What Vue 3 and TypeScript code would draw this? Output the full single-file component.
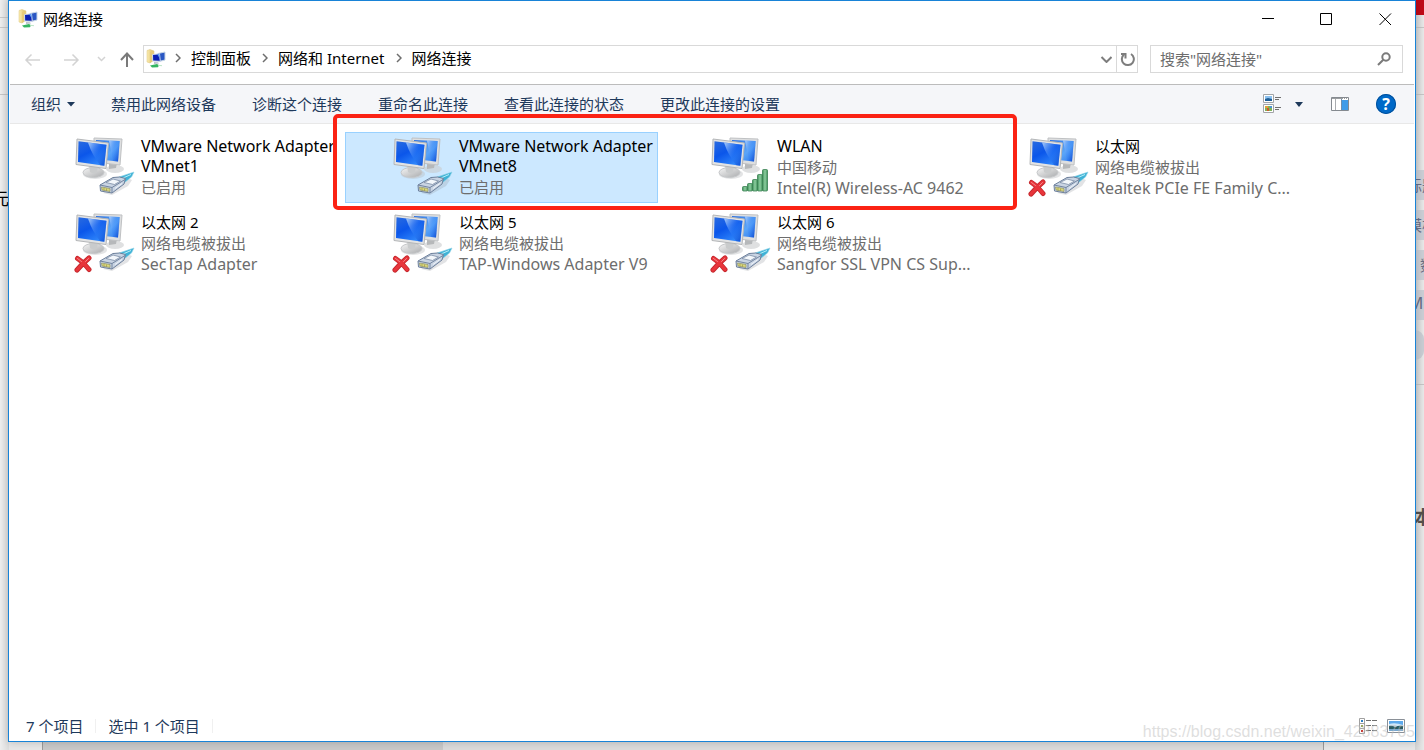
<script setup lang="ts">
import { ref } from 'vue'

interface Connection {
  name: string[]
  details: string[]
  kind: 'wired' | 'wireless'
  unplugged: boolean
}

const connections: Connection[] = [
  { name: ['VMware Network Adapter', 'VMnet1'], details: ['已启用'], kind: 'wired', unplugged: false },
  { name: ['VMware Network Adapter', 'VMnet8'], details: ['已启用'], kind: 'wired', unplugged: false },
  { name: ['WLAN'], details: ['中国移动', 'Intel(R) Wireless-AC 9462'], kind: 'wireless', unplugged: false },
  { name: ['以太网'], details: ['网络电缆被拔出', 'Realtek PCIe FE Family C...'], kind: 'wired', unplugged: true },
  { name: ['以太网 2'], details: ['网络电缆被拔出', 'SecTap Adapter'], kind: 'wired', unplugged: true },
  { name: ['以太网 5'], details: ['网络电缆被拔出', 'TAP-Windows Adapter V9'], kind: 'wired', unplugged: true },
  { name: ['以太网 6'], details: ['网络电缆被拔出', 'Sangfor SSL VPN CS Sup...'], kind: 'wired', unplugged: true },
]

const crumbs = ['控制面板', '网络和 Internet', '网络连接']
const commands = ['禁用此网络设备', '诊断这个连接', '重命名此连接', '查看此连接的状态', '更改此连接的设置']
const selected = ref(1)
const query = ref('')

const isLatin = (text: string): boolean => /^[\x20-\x7e]+$/.test(text)
</script>

<template>
  <div class="desktop">
    <svg class="defs" width="0" height="0" aria-hidden="true">
      <defs>
        <linearGradient id="screen" x1="0" y1="0" x2="0.6" y2="1">
          <stop offset="0" stop-color="#2a6be0" />
          <stop offset="0.5" stop-color="#0b56ea" />
          <stop offset="1" stop-color="#2f86fb" />
        </linearGradient>
        <linearGradient id="screenBack" x1="0" y1="0" x2="1" y2="1">
          <stop offset="0" stop-color="#2c6fe0" />
          <stop offset="0.6" stop-color="#5ba6f8" />
          <stop offset="1" stop-color="#2d78ee" />
        </linearGradient>
        <linearGradient id="shine" x1="0" y1="0" x2="1" y2="0.7">
          <stop offset="0" stop-color="#cfe6ff" stop-opacity="0.8" />
          <stop offset="0.6" stop-color="#2f7ff8" stop-opacity="0.3" />
          <stop offset="1" stop-color="#063fc8" stop-opacity="0.6" />
        </linearGradient>
        <linearGradient id="stand" x1="0" y1="0" x2="1" y2="1">
          <stop offset="0" stop-color="#f6f6f6" />
          <stop offset="1" stop-color="#a9abad" />
        </linearGradient>
        <linearGradient id="bar" x1="0" y1="0" x2="1" y2="0">
          <stop offset="0" stop-color="#3c9257" />
          <stop offset="0.5" stop-color="#8fcda1" />
          <stop offset="1" stop-color="#3c9257" />
        </linearGradient>
        <linearGradient id="folder" x1="0" y1="0" x2="1" y2="0">
          <stop offset="0" stop-color="#fbedb4" />
          <stop offset="1" stop-color="#d9b95c" />
        </linearGradient>
        <symbol id="folder-net" viewBox="0 0 20 20">
          <path d="M1 1.500 4 .5 8 2v9l-4 3-3-1z" fill="url(#folder)" stroke="#dcc478" stroke-width=".5" />
          <path d="M4 3 8 2v9l-4 3z" fill="#e6cb7a" />
          <path d="M12 4.500 19 3v8l-6 1.500z" fill="#2a57c4" stroke="#c7d6e6" />
          <path d="m6.500 5.500 7-.7.8 7.500-7.600-.3z" fill="#0b20b4" stroke="#d4deea" />
          <path d="m11 5 2.300-.2.6 5z" fill="#5f9df4" />
          <path d="m8 13 4 .2 1 1.300-5 .4z" fill="#bbc3ca" />
          <path d="M4 16.500 11 15l2 1.200-1 2-6 .3z" fill="#35b562" />
          <path d="m12 16.300 4 .4" stroke="#bde5c8" />
        </symbol>
      </defs>
    </svg>

    <div class="backdrop" aria-hidden="true">
      <div class="edge edge-left">
        <i class="band"></i>
        <i class="rule"></i>
        <span class="scrap scrap-left">元</span>
      </div>
      <div class="edge edge-right">
        <i class="red"></i>
        <i class="rule rule-top"></i>
        <i class="rule"></i>
        <span class="scrap tag tag-a">标题</span>
        <span class="scrap tag tag-b">模板</span>
        <span class="scrap tag tag-c">数据</span>
        <span class="scrap tag tag-d">M</span>
        <i class="knob"></i>
        <i class="rule rule-low"></i>
        <span class="scrap heading">本</span>
      </div>
      <div class="sheet"></div>
    </div>

    <main class="window">
      <header class="titlebar">
        <svg class="app-icon" width="20" height="20"><use href="#folder-net" /></svg>
        <h1>网络连接</h1>
        <div class="caption">
          <button type="button" aria-label="最小化">
            <svg width="13" height="13" viewBox="0 0 13 13"><path d="M1 5.500h12" /></svg>
          </button>
          <button type="button" aria-label="最大化">
            <svg width="13" height="13" viewBox="0 0 13 13"><path d="M.5.5h11v11H.5z" /></svg>
          </button>
          <button type="button" aria-label="关闭">
            <svg width="13" height="13" viewBox="0 0 13 13"><path d="m.5.5 11.500 11.500m0-11.500-11.500 11.500" /></svg>
          </button>
        </div>
      </header>

      <nav class="navrow">
        <div class="history">
          <button type="button" class="back" aria-label="后退" disabled>
            <svg width="16" height="14" viewBox="0 0 16 14"><path d="M16 8H2M7.500 2.500 2 8l5.500 5.500" /></svg>
          </button>
          <button type="button" class="forward" aria-label="前进" disabled>
            <svg width="16" height="14" viewBox="0 0 16 14"><path d="M0 8h14M8.500 2.500 14 8l-5.500 5.500" /></svg>
          </button>
          <button type="button" class="recent" aria-label="最近位置" disabled>
            <svg width="9" height="6" viewBox="0 0 9 6"><path d="m1 1 3.500 3.500L8 1" /></svg>
          </button>
          <button type="button" class="up" aria-label="上移">
            <svg width="14" height="16" viewBox="0 0 14 16"><path d="M7 16V2.500M1 9l6-6.500L13 9" /></svg>
          </button>
        </div>
        <div class="address">
          <svg class="address-icon" width="20" height="20"><use href="#folder-net" /></svg>
          <ol>
            <li v-for="crumb in crumbs" :key="crumb">
              <svg width="6" height="10" viewBox="0 0 6 10"><path d="m1 1 4 4-4 4" /></svg>
              <a href="#">{{ crumb }}</a>
            </li>
          </ol>
          <button type="button" class="drop" aria-label="以前的位置">
            <svg width="12" height="8" viewBox="0 0 12 8"><path d="m1.500 2 5 5 5-5" /></svg>
          </button>
          <button type="button" class="refresh" aria-label="刷新">
            <svg width="16" height="16" viewBox="0 0 16 16">
              <path d="M12 3A6 6 0 1 1 5 3.500" />
              <path d="M2 3h4.500v4.500" />
            </svg>
          </button>
        </div>
        <label class="search">
          <input v-model="query" type="text" aria-label="搜索" placeholder="搜索&quot;网络连接&quot;" />
          <svg width="14" height="14" viewBox="0 0 14 14"><circle cx="9" cy="5" r="3.700" /><path d="M6.300 7.700 1 13" /></svg>
        </label>
      </nav>

      <div class="toolbar">
        <button type="button" class="organize">
          组织
          <svg width="9" height="5" viewBox="0 0 9 5"><path d="M1 0h8L5 4.500z" fill="#1e395b" /></svg>
        </button>
        <button v-for="command in commands" :key="command" type="button">{{ command }}</button>
        <div class="tools">
          <button type="button" aria-label="更改视图">
            <svg width="19" height="20" viewBox="0 0 19 20">
              <path d="M.5.500h10v8H.5zM.5 10.500h10v8H.5z" fill="#fff" stroke="#a2a5a8" />
              <path d="M2 2h7v5H2z" fill="#8cc1ef" /><path d="m2 5 3-1 4 1v2H2z" fill="#1f5f96" />
              <path d="M2 12h7v5H2z" fill="#7fb35b" /><path d="M2 12h3v2H2z" fill="#e1a33a" /><path d="M4 14h2v3H4z" fill="#cf5a2c" /><path d="M7 12h2v2H7z" fill="#4e94d2" />
              <path d="M12 3.500h6M12 5.500h4M12 13.500h6M12 15.500h4" stroke="#707070" />
            </svg>
          </button>
          <button type="button" class="view-more" aria-label="更多选项">
            <svg width="8" height="5" viewBox="0 0 8 5"><path d="M0 0h8L4 5z" fill="#1e395b" /></svg>
          </button>
          <button type="button" class="pane" aria-label="显示预览窗格">
            <svg width="18" height="14" viewBox="0 0 18 14">
              <path d="M.5.500h17v13H.5z" fill="#fff" stroke="#858a90" />
              <path d="M1 1h16v1H1z" fill="#9a9da0" /><path d="M12 1h1v1h-1zM14 1h1v1h-1zM16 1h1v1h-1z" fill="#fff" />
              <path d="M4.500 2v11" stroke="#a9acb0" /><path d="M10.500 2v11" stroke="#6c8dae" />
              <path d="M11 3h6v10h-6z" fill="#3f9be8" />
            </svg>
          </button>
          <button type="button" class="help" aria-label="获取帮助"><span>?</span></button>
        </div>
      </div>

      <section class="content">
        <ul class="tiles">
          <li v-for="(item, index) in connections" :key="index">
            <button
              type="button"
              class="tile"
              :class="{ selected: selected === index }"
              @click="selected = index"
            >
              <svg class="tile-icon" width="62" height="62" viewBox="0 0 62 62" aria-hidden="true">
                <ellipse cx="42" cy="34" rx="9" ry="4" fill="#c9cbcd" opacity=".6" />
                <path d="m36 27 8 1-1 5-7 1z" fill="#b6b8ba" />
                <path d="m21 3 28 1-2 26-26-3z" fill="#dedfe0" stroke="#bfc1c3" />
                <path d="m23 5 23.700 1L45 26.500 22 24z" fill="url(#screenBack)" />
                <path d="m36 5.500 10.700.5L45 26.500l-5-.6z" fill="url(#shine)" />
                <ellipse cx="22" cy="39" rx="12" ry="5" fill="#b9bbbd" opacity=".4" />
                <ellipse cx="20.500" cy="37.500" rx="10.500" ry="5" fill="url(#stand)" stroke="#c6c8ca" />
                <path d="m16 30 9 1.200-1 6.300q-4 2-7-.5z" fill="#c9cbcc" />
                <path d="m4 4 31.500 4L33 33.500 3 29.500z" fill="#e2e3e4" stroke="#b4b6b8" />
                <path d="m5.500 6.300 28 3.500-2.200 21L5 27z" fill="url(#screen)" />
                <path d="m15 7.500 18.500 2.300-2.200 21-4-.5Q19 20 15 7.500z" fill="url(#shine)" />
                <template v-if="item.kind === 'wired'">
                  <path d="m30 58 9 2 16-9 4-6-7-3z" fill="#8b9196" opacity=".25" />
                  <path d="m46 42 15-5-2.500 5-7.500 6z" fill="#3fb2d6" stroke="#8ed2e6" stroke-width=".6" />
                  <path d="m50 43 8-3.500" stroke="#b5eef7" />
                  <path d="m27 50 13-7.500q7-1.500 12.500 1l-1.500 5.500-12 9L27.500 56z" fill="#c9d4e3" stroke="#6c7f9b" />
                  <path d="m27 50 12 2.500 13-8M39 52.500v5.500" fill="none" stroke="#72849f" />
                  <path d="m33 47.500 8.500 2 6-3.500-7.500-2z" fill="#f3f7fb" stroke="#7c8da6" stroke-width=".8" />
                  <path d="m42 53.500 7-5" stroke="#eff4fa" />
                  <path d="m28.500 52 8.500 1.500v3L29 55z" fill="#d9d77c" stroke="#8d9168" stroke-width=".7" />
                  <path d="M31 53v2.500M33.500 53.500V56" stroke="#a29b49" stroke-width=".7" />
                </template>
                <g v-else fill="url(#bar)" stroke="#3a8053" stroke-width=".8">
                  <rect x="33.500" y="51.500" width="5" height="4.500" rx="1" />
                  <rect x="38.500" y="48.500" width="5" height="7.500" rx="1" />
                  <rect x="43.500" y="44.500" width="5" height="11.500" rx="1" />
                  <rect x="48.500" y="39.500" width="5" height="16.500" rx="1" />
                  <rect x="53.500" y="34.500" width="5" height="21.500" rx="1" />
                </g>
                <g v-if="item.unplugged" fill="none" stroke-linecap="round">
                  <path d="M4.500 47.500Q10 51 16 58.500M16 47Q10 52 4 59" stroke="#c4272c" stroke-width="5" />
                  <path d="M4.500 47.500Q10 51 16 58.500M16 47Q10 52 4 59" stroke="#e8353b" stroke-width="3.400" />
                  <path d="m4.500 47.500 4 3M15.500 47.500l-3 3" stroke="#f4878a" stroke-width="1" />
                </g>
              </svg>
              <span class="label">
                <span class="name">
                  <span v-for="line in item.name" :key="line" :class="{ latin: isLatin(line) }">{{ line }}</span>
                </span>
                <span v-for="line in item.details" :key="line" class="detail" :class="{ latin: isLatin(line) }">{{ line }}</span>
              </span>
            </button>
          </li>
        </ul>
      </section>

      <footer class="status">
        <span class="cell">7 个项目</span>
        <span class="cell">选中 1 个项目</span>
        <div class="views">
          <button type="button" aria-label="详细信息">
            <svg width="19" height="16" viewBox="0 0 19 16">
              <path d="M.5.500h5v15h-5zM.5 5.500h5M.5 10.500h5" fill="#fff" stroke="#a0a0a0" />
              <path d="M2 2h2v2H2z" fill="#2f7fc2" /><path d="M2 7h2v2H2z" fill="#9ba85b" /><path d="M2 12h2v2H2z" fill="#c93e35" />
              <path d="M7 2.500h5m1 0h5M7 7.500h5m1 0h5M7 12.500h5m1 0h5" stroke="#6f6f6f" />
            </svg>
          </button>
          <button type="button" aria-label="大缩略图">
            <svg width="18" height="14" viewBox="0 0 18 14">
              <path d="M.5.500h17v13H.5z" fill="#fff" stroke="#8a9097" />
              <path d="M2 2h14v10H2z" fill="#5da9ec" /><path d="M2 5q6-2 14 1v2H2z" fill="#cfe7f9" />
              <path d="M2 7q3-1 6 1 4-2 8-1v3H2z" fill="#2b5b62" /><path d="M2 10h14v2H2z" fill="#77a7cf" />
            </svg>
          </button>
        </div>
      </footer>
    </main>

    <div class="highlight" aria-hidden="true"></div>
    <div class="watermark">https://blog.csdn.net/weixin_42883765</div>
  </div>
</template>

<style>
html,
body {
  margin: 0;
  background: #e6e6e6;
}
</style>

<style scoped>
.desktop {
  position: relative;
  box-sizing: border-box;
  min-height: 100vh;
  padding: 0 8px 8px;
  display: flex;
  overflow: hidden;
  font: 15px/20px "Noto Sans", "Noto Sans CJK SC", sans-serif;
  color: #000;
}
.defs {
  position: absolute;
}
button {
  padding: 0;
  border: 0;
  background: none;
  font: inherit;
  color: inherit;
  display: flex;
  align-items: center;
  justify-content: center;
}
svg {
  display: block;
  flex: none;
}

/* Page behind the window */
.backdrop {
  position: absolute;
  inset: 0;
  background: #e6e6e6;
}
.edge {
  position: absolute;
  top: 0;
  bottom: 0;
  width: 9px;
  overflow: hidden;
}
.edge-left {
  left: 0;
  background: linear-gradient(90deg, #eeeeee, #dcdcdc);
}
.edge-right {
  right: 0;
  background: linear-gradient(90deg, #d2d2d2, #e8e8e8);
}
.edge i {
  position: absolute;
  left: 0;
  right: 0;
}
.edge .band {
  top: 17px;
  height: 9px;
  border: solid #c8c8c8;
  border-width: 1px 0;
}
.edge .rule {
  top: 94px;
  height: 1px;
  background: #c4c4c4;
}
.edge .rule-top {
  top: 27px;
}
.edge .rule-low {
  top: 384px;
}
.edge .red {
  top: 0;
  height: 15px;
  background: #c00a18;
}
.edge .knob {
  top: 330px;
  height: 30px;
  background: #c8ccd2;
  border-radius: 0 15px 15px 0;
}
.scrap {
  position: absolute;
  white-space: nowrap;
}
.scrap-left {
  top: 189px;
  right: 0;
  font-size: 17px;
}
.tag {
  left: 0;
  height: 30px;
  width: 20px;
  line-height: 30px;
  background: #cacdd4;
  color: #6a6e85;
  text-indent: -8px;
}
.tag-a {
  top: 170px;
}
.tag-b {
  top: 210px;
}
.tag-c {
  top: 250px;
  text-indent: 5px;
}
.tag-d {
  top: 290px;
  font-size: 17px;
  line-height: 26px;
  text-indent: -7px;
}
.heading {
  top: 507px;
  left: -1px;
  font-size: 18px;
  font-weight: 700;
  color: #55504c;
}
.sheet {
  position: absolute;
  left: 42px;
  right: 100px;
  bottom: 0;
  height: 9px;
  border: solid #999;
  border-width: 0 1px;
  background: linear-gradient(90deg, #c8c8c8 400px, #dadada 400px);
}

/* Window */
.window {
  position: relative;
  flex: 1;
  min-width: 0;
  display: flex;
  flex-direction: column;
  border: 1px solid #1883d7;
  background: #fff;
  box-shadow: 0 0 8px rgba(0, 0, 0, 0.2);
}
.titlebar {
  height: 36px;
  display: flex;
  align-items: center;
  padding-left: 9px;
}
.titlebar h1 {
  margin: 0 0 0 5px;
  font: inherit;
}
.caption {
  margin-left: auto;
  display: flex;
}
.caption button {
  width: 59px;
  height: 36px;
}
.caption path {
  fill: none;
  stroke: #000;
}
.navrow {
  display: flex;
  align-items: center;
  height: 28px;
  padding: 8px 12px 11px 15px;
}
.history {
  display: flex;
  align-items: center;
  width: 119px;
}
.history path {
  fill: none;
  stroke: #d3d3d3;
  stroke-width: 1.5;
}
.forward {
  margin-left: 24px;
}
.recent {
  margin-left: 17px;
}
.up {
  margin-left: 14px;
}
.history .up path {
  stroke: #7a7a7a;
  stroke-width: 2;
}
.address,
.search {
  box-sizing: border-box;
  height: 28px;
  border: 1px solid #d9d9d9;
  display: flex;
  align-items: center;
}
.address {
  flex: 1;
  min-width: 0;
}
.address-icon {
  margin-left: 2px;
}
.address ol {
  flex: 1;
  display: flex;
  margin: 0 0 0 9px;
  padding: 0 0 2px;
  list-style: none;
}
.address li {
  display: flex;
  align-items: center;
  margin-right: 11px;
}
.address li svg {
  margin-right: 10px;
}
.address path {
  fill: none;
  stroke: #6e6e6e;
  stroke-width: 1.5;
}
.address a {
  color: #000;
  text-decoration: none;
}
.drop {
  width: 20px;
  height: 26px;
}
.address .drop path,
.address .refresh path {
  stroke: #7d7d7d;
  stroke-width: 2;
}
.refresh {
  width: 21px;
  height: 26px;
  border-left: 1px solid #d9d9d9;
}
.search {
  width: 253px;
  margin-left: 12px;
  padding: 0 11px 0 9px;
}
.search input {
  flex: 1;
  min-width: 0;
  padding: 0;
  border: 0;
  outline: 0;
  background: none;
  font: inherit;
}
.search input::placeholder {
  color: #6d6d6d;
  opacity: 1;
}
.search circle,
.search path {
  fill: none;
  stroke: #7a7a7a;
  stroke-width: 2;
}
.toolbar {
  display: flex;
  align-items: center;
  gap: 36px;
  height: 38px;
  margin: 0 1px;
  padding: 0 18px 0 21px;
  border-top: 1px solid #bcbcbc;
  border-bottom: 1px solid #e8e8e8;
  background: #f5f6f9;
  color: #1e395b;
  white-space: nowrap;
}
.organize {
  gap: 5px;
}
.tools {
  display: flex;
  align-items: center;
  margin-left: auto;
}
.view-more {
  margin-left: 13px;
}
.pane {
  margin-left: 28px;
}
.help {
  width: 20px;
  height: 20px;
  margin-left: 27px;
  border-radius: 50%;
  background: #0069c8;
  box-shadow: inset 0 0 0 1px #00509c;
  color: #fff;
  font-size: 16px;
  font-weight: 700;
}
.content {
  flex: 1;
  padding: 8px 18px;
}
.tiles {
  display: grid;
  grid-template-columns: repeat(auto-fill, 313px);
  gap: 5px;
  margin: 0;
  padding: 0;
  list-style: none;
}
.tile {
  box-sizing: border-box;
  width: 100%;
  height: 71px;
  padding: 2px 0 0 45px;
  border: 1px solid transparent;
  align-items: flex-start;
  justify-content: flex-start;
  gap: 6px;
  text-align: left;
}
.tile.selected {
  border-color: #99d1ff;
  background: #cce8ff;
}
.label {
  display: flex;
  flex-direction: column;
  padding-top: 1px;
  white-space: nowrap;
}
.name {
  padding-bottom: 1px;
}
.name span {
  display: block;
}
.detail {
  line-height: 21px;
  color: #6d6d6d;
}
.latin {
  font-size: 16px;
}
.status {
  display: flex;
  align-items: center;
  height: 30px;
  padding: 0 10px 0 17px;
  color: #1e395b;
}
.cell {
  margin-right: 12px;
  padding-right: 12px;
  line-height: 14px;
  border-right: 1px solid #f0f0f0;
}
.views {
  display: flex;
  align-items: center;
  gap: 9px;
  margin-left: auto;
}

/* Annotation over the tiles */
.highlight {
  position: absolute;
  box-sizing: border-box;
  left: 333px;
  top: 114px;
  width: 684px;
  height: 96px;
  border: 4px solid #fb2214;
  border-radius: 5px;
  pointer-events: none;
}
.watermark {
  position: absolute;
  right: 9px;
  bottom: 8px;
  font: 16px/20px "Liberation Sans", Arial, sans-serif;
  color: rgba(190, 190, 190, 0.5);
  pointer-events: none;
}
</style>
